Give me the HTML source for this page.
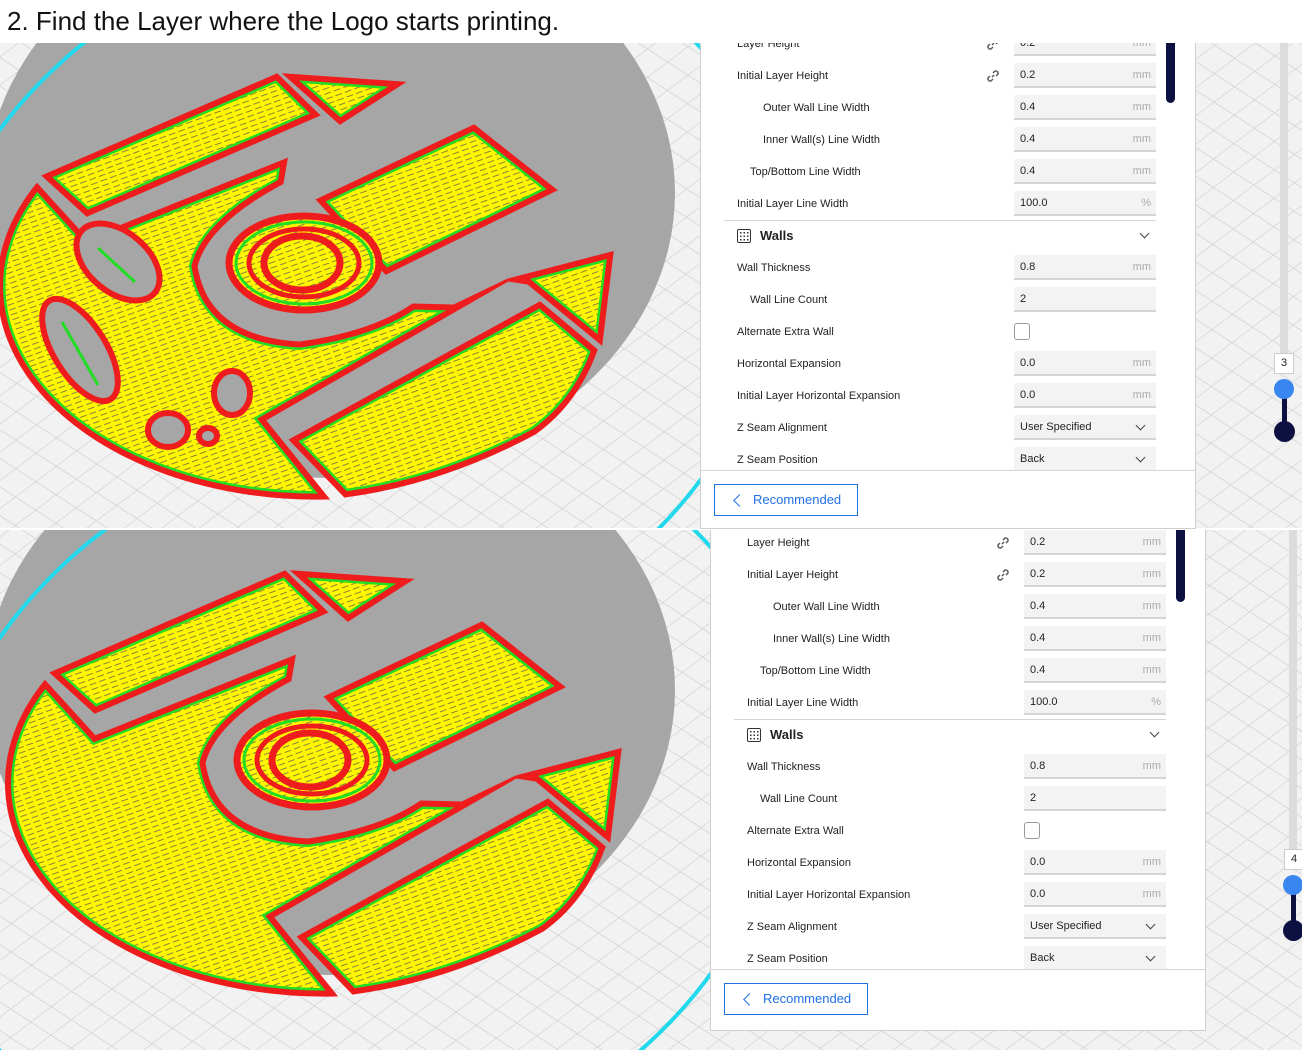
<!DOCTYPE html>
<html><head><meta charset="utf-8">
<style>
*{margin:0;padding:0;box-sizing:border-box}
html,body{width:1302px;height:1050px;overflow:hidden}
body{background:#fff;font-family:"Liberation Sans",sans-serif;position:relative}
.title{position:absolute;left:7px;top:6px;font-size:26px;color:#111;white-space:nowrap}
.view{position:absolute;left:0;overflow:hidden}
.panel{position:absolute;background:#fff;border:1px solid #cfcfcf;border-top:none;overflow:hidden}
.content{position:absolute;left:0;width:495px;height:440px}
.lab{position:absolute;font-size:11px;color:#222;white-space:nowrap;line-height:14px}
.inp{position:absolute;left:313px;width:142px;height:25px;background:#f3f3f3;border-bottom:2px solid #d4d4d4;font-size:11px;color:#222;line-height:24px;padding-left:6px}
.inp .u{position:absolute;right:5px;top:0;color:#aaa}
.dd{position:absolute;right:12px;top:7px;width:7px;height:7px;border-right:1.3px solid #444;border-bottom:1.3px solid #444;transform:rotate(45deg)}
.footer{position:absolute;left:0;top:426px;width:495px;height:80px;background:#fff;border-top:1px solid #d6d6d6}
.btn{position:absolute;left:13px;top:13px;width:144px;height:32px;border:1.5px solid #2071e8;color:#2071e8;font-size:13px;line-height:29px;padding-left:38px}
.btn:before{content:"";position:absolute;left:20px;top:11px;width:8px;height:8px;border-left:1.6px solid #2071e8;border-bottom:1.6px solid #2071e8;transform:rotate(45deg)}
.sb{position:absolute;left:465px;top:-60px;width:9px;height:119px;background:#0d1141;border-radius:5px}
.slider{position:absolute}
</style></head><body>
<div class="title">2. Find the Layer where the Logo starts printing.</div>

<svg width="0" height="0" style="position:absolute;left:0;top:0" xmlns="http://www.w3.org/2000/svg">
<defs>
<pattern id="grid" width="24" height="24" patternUnits="userSpaceOnUse" patternTransform="rotate(33) skewX(-20)">
<rect width="24" height="24" fill="#f2f2f2"/><path d="M0 0H24M0 0V24" stroke="#cfcfcf" stroke-width="1.3"/></pattern>
<pattern id="yel" width="10" height="5" patternUnits="userSpaceOnUse" patternTransform="rotate(-20)">
<rect width="10" height="5" fill="#fff600"/><rect y="4" width="7" height="1" fill="#555" opacity="0.7"/></pattern>
<path id="s1" d="M45 682 L95 737 L294 657 L290 680 Q215 720 204 763 Q215 835 308 840 Q380 830 421 802 L462 803 L516 777 L272 917 L335 995 A318 212 0 0 1 45 682 Z"/>
<path id="s2" d="M52 673 L285 572 L326 612 L95 712 Z"/>
<path id="s3" d="M294 572 L410 580 L348 620 Z"/>
<path id="s4" d="M326 697 L482 623 L563 687 L394 770 Z"/>
<path id="s5" d="M516 777 L620 750 L609 840 L536 780 Z"/>
<path id="s6" d="M299 937 L548 800 L604 847 Q585 900 543 930 Q450 980 353 993 Z"/>
<clipPath id="c1"><use href="#s1"/></clipPath>
<clipPath id="c2"><use href="#s2"/></clipPath>
<clipPath id="c3"><use href="#s3"/></clipPath>
<clipPath id="c4"><use href="#s4"/></clipPath>
<clipPath id="c5"><use href="#s5"/></clipPath>
<clipPath id="c6"><use href="#s6"/></clipPath>
<g id="logo">
<use href="#s1" fill="url(#yel)"/><use href="#s1" fill="none" stroke="#22dd22" stroke-width="14" clip-path="url(#c1)"/><use href="#s1" fill="none" stroke="#ee1c1c" stroke-width="9" clip-path="url(#c1)"/><use href="#s1" fill="none" stroke="#ee1c1c" stroke-width="3"/>
<use href="#s2" fill="url(#yel)"/><use href="#s2" fill="none" stroke="#22dd22" stroke-width="14" clip-path="url(#c2)"/><use href="#s2" fill="none" stroke="#ee1c1c" stroke-width="9" clip-path="url(#c2)"/><use href="#s2" fill="none" stroke="#ee1c1c" stroke-width="3"/>
<use href="#s3" fill="url(#yel)"/><use href="#s3" fill="none" stroke="#22dd22" stroke-width="14" clip-path="url(#c3)"/><use href="#s3" fill="none" stroke="#ee1c1c" stroke-width="9" clip-path="url(#c3)"/><use href="#s3" fill="none" stroke="#ee1c1c" stroke-width="3"/>
<use href="#s4" fill="url(#yel)"/><use href="#s4" fill="none" stroke="#22dd22" stroke-width="14" clip-path="url(#c4)"/><use href="#s4" fill="none" stroke="#ee1c1c" stroke-width="9" clip-path="url(#c4)"/><use href="#s4" fill="none" stroke="#ee1c1c" stroke-width="3"/>
<use href="#s5" fill="url(#yel)"/><use href="#s5" fill="none" stroke="#22dd22" stroke-width="14" clip-path="url(#c5)"/><use href="#s5" fill="none" stroke="#ee1c1c" stroke-width="9" clip-path="url(#c5)"/><use href="#s5" fill="none" stroke="#ee1c1c" stroke-width="3"/>
<use href="#s6" fill="url(#yel)"/><use href="#s6" fill="none" stroke="#22dd22" stroke-width="14" clip-path="url(#c6)"/><use href="#s6" fill="none" stroke="#ee1c1c" stroke-width="9" clip-path="url(#c6)"/><use href="#s6" fill="none" stroke="#ee1c1c" stroke-width="3"/>
<ellipse cx="312" cy="760" rx="75" ry="47" fill="url(#yel)" stroke="#ee1c1c" stroke-width="7"/>
<ellipse cx="312" cy="760" rx="68" ry="41" fill="none" stroke="#22dd22" stroke-width="3"/>
<ellipse cx="312" cy="760" rx="55" ry="34" fill="none" stroke="#ee1c1c" stroke-width="5"/>
<ellipse cx="310" cy="760" rx="38" ry="27" fill="url(#yel)" stroke="#ee1c1c" stroke-width="7"/>
</g>
</defs>
</svg>

<!-- TOP VIEW -->
<div class="view" style="top:43px;width:1302px;height:486px;">
<svg width="1302" height="486" viewBox="0 43 1302 486" xmlns="http://www.w3.org/2000/svg">
<rect x="0" y="43" width="1302" height="486" fill="url(#grid)"/>
<ellipse cx="330" cy="193" rx="345" ry="285" fill="#a6a6a6"/>
<ellipse cx="350" cy="305" rx="440" ry="365" transform="rotate(-23 350 305)" fill="none" stroke="#22d8ec" stroke-width="4"/>
<g transform="translate(-8,-497)"><use href="#logo"/></g>
<g fill="#a6a6a6" stroke="#ee1c1c" stroke-width="6">
<ellipse cx="118" cy="262" rx="48" ry="30" transform="rotate(40 118 262)"/>
<ellipse cx="80" cy="350" rx="26" ry="58" transform="rotate(-32 80 350)"/>
<ellipse cx="232" cy="393" rx="18" ry="22"/>
<ellipse cx="168" cy="430" rx="20" ry="17"/>
<ellipse cx="208" cy="436" rx="9" ry="8"/>
</g>
<g fill="none" stroke="#22dd22" stroke-width="3">
<path d="M98 248 L135 282"/><path d="M62 322 L98 385"/>
</g>
</svg>
</div>

<!-- BOTTOM VIEW -->
<div class="view" style="top:530px;width:1302px;height:520px;">
<svg width="1302" height="520" viewBox="0 530 1302 520" xmlns="http://www.w3.org/2000/svg">
<rect x="0" y="530" width="1302" height="520" fill="url(#grid)"/>
<ellipse cx="330" cy="690" rx="345" ry="285" fill="#a6a6a6"/>
<ellipse cx="358" cy="802" rx="440" ry="365" transform="rotate(-23 358 802)" fill="none" stroke="#22d8ec" stroke-width="4"/>
<use href="#logo"/>
</svg>
</div>
<div style="position:absolute;left:0;top:528px;width:1302px;height:2px;background:#fff"></div>

<!-- TOP PANEL -->
<div class="panel" style="left:700px;top:43px;width:496px;height:486px;">
<div class="content" style="top:1px">
<div class="sb"></div>
<div class="lab" style="left:36px;top:-7px">Layer Height</div><svg style="position:absolute;left:284px;top:-8px" width="16" height="16" viewBox="0 0 16 16"><path d="M7 9 L9 7 M5 8 L3 10 A2.5 2.5 0 0 0 6 13 L8 11 M8 5 L10 3 A2.5 2.5 0 0 1 13 6 L11 8" fill="none" stroke="#555" stroke-width="1.4"/></svg><div class="inp" style="top:-13px">0.2<span class="u">mm</span></div>
<div class="lab" style="left:36px;top:25px">Initial Layer Height</div><svg style="position:absolute;left:284px;top:24px" width="16" height="16" viewBox="0 0 16 16"><path d="M7 9 L9 7 M5 8 L3 10 A2.5 2.5 0 0 0 6 13 L8 11 M8 5 L10 3 A2.5 2.5 0 0 1 13 6 L11 8" fill="none" stroke="#555" stroke-width="1.4"/></svg><div class="inp" style="top:19px">0.2<span class="u">mm</span></div>
<div class="lab" style="left:62px;top:57px">Outer Wall Line Width</div><div class="inp" style="top:51px">0.4<span class="u">mm</span></div>
<div class="lab" style="left:62px;top:89px">Inner Wall(s) Line Width</div><div class="inp" style="top:83px">0.4<span class="u">mm</span></div>
<div class="lab" style="left:49px;top:121px">Top/Bottom Line Width</div><div class="inp" style="top:115px">0.4<span class="u">mm</span></div>
<div class="lab" style="left:36px;top:153px">Initial Layer Line Width</div><div class="inp" style="top:147px">100.0<span class="u">%</span></div>
<div style="position:absolute;left:23px;top:176px;width:432px;height:1px;background:#d4d4d4"></div>
<div style="position:absolute;left:36px;top:185px;width:14px;height:14px;border:1.5px solid #333;border-radius:2px;background:radial-gradient(circle,#333 0.8px,transparent 1px) 1px 1px/3.5px 3.5px"></div>
<div class="lab" style="left:59px;top:184px;font-size:13px;font-weight:bold;line-height:16px">Walls</div>
<div style="position:absolute;left:440px;top:186px;width:7px;height:7px;border-right:1.2px solid #444;border-bottom:1.2px solid #444;transform:rotate(45deg)"></div>
<div class="lab" style="left:36px;top:217px">Wall Thickness</div><div class="inp" style="top:211px">0.8<span class="u">mm</span></div>
<div class="lab" style="left:49px;top:249px">Wall Line Count</div><div class="inp" style="top:243px">2</div>
<div class="lab" style="left:36px;top:281px">Alternate Extra Wall</div><div style="position:absolute;left:313px;top:279px;width:16px;height:17px;border:1px solid #999;border-radius:3px"></div>
<div class="lab" style="left:36px;top:313px">Horizontal Expansion</div><div class="inp" style="top:307px">0.0<span class="u">mm</span></div>
<div class="lab" style="left:36px;top:345px">Initial Layer Horizontal Expansion</div><div class="inp" style="top:339px">0.0<span class="u">mm</span></div>
<div class="lab" style="left:36px;top:377px">Z Seam Alignment</div><div class="inp" style="top:371px">User Specified<span class="dd"></span></div>
<div class="lab" style="left:36px;top:409px">Z Seam Position</div><div class="inp" style="top:403px">Back<span class="dd"></span></div>
<div class="footer"><div class="btn">Recommended</div></div>
</div>
</div>

<!-- BOTTOM PANEL -->
<div class="panel" style="left:710px;top:530px;width:496px;height:501px;">
<div class="content" style="top:13px">
<div class="sb"></div>
<div class="lab" style="left:36px;top:-7px">Layer Height</div><svg style="position:absolute;left:284px;top:-8px" width="16" height="16" viewBox="0 0 16 16"><path d="M7 9 L9 7 M5 8 L3 10 A2.5 2.5 0 0 0 6 13 L8 11 M8 5 L10 3 A2.5 2.5 0 0 1 13 6 L11 8" fill="none" stroke="#555" stroke-width="1.4"/></svg><div class="inp" style="top:-13px">0.2<span class="u">mm</span></div>
<div class="lab" style="left:36px;top:25px">Initial Layer Height</div><svg style="position:absolute;left:284px;top:24px" width="16" height="16" viewBox="0 0 16 16"><path d="M7 9 L9 7 M5 8 L3 10 A2.5 2.5 0 0 0 6 13 L8 11 M8 5 L10 3 A2.5 2.5 0 0 1 13 6 L11 8" fill="none" stroke="#555" stroke-width="1.4"/></svg><div class="inp" style="top:19px">0.2<span class="u">mm</span></div>
<div class="lab" style="left:62px;top:57px">Outer Wall Line Width</div><div class="inp" style="top:51px">0.4<span class="u">mm</span></div>
<div class="lab" style="left:62px;top:89px">Inner Wall(s) Line Width</div><div class="inp" style="top:83px">0.4<span class="u">mm</span></div>
<div class="lab" style="left:49px;top:121px">Top/Bottom Line Width</div><div class="inp" style="top:115px">0.4<span class="u">mm</span></div>
<div class="lab" style="left:36px;top:153px">Initial Layer Line Width</div><div class="inp" style="top:147px">100.0<span class="u">%</span></div>
<div style="position:absolute;left:23px;top:176px;width:432px;height:1px;background:#d4d4d4"></div>
<div style="position:absolute;left:36px;top:185px;width:14px;height:14px;border:1.5px solid #333;border-radius:2px;background:radial-gradient(circle,#333 0.8px,transparent 1px) 1px 1px/3.5px 3.5px"></div>
<div class="lab" style="left:59px;top:184px;font-size:13px;font-weight:bold;line-height:16px">Walls</div>
<div style="position:absolute;left:440px;top:186px;width:7px;height:7px;border-right:1.2px solid #444;border-bottom:1.2px solid #444;transform:rotate(45deg)"></div>
<div class="lab" style="left:36px;top:217px">Wall Thickness</div><div class="inp" style="top:211px">0.8<span class="u">mm</span></div>
<div class="lab" style="left:49px;top:249px">Wall Line Count</div><div class="inp" style="top:243px">2</div>
<div class="lab" style="left:36px;top:281px">Alternate Extra Wall</div><div style="position:absolute;left:313px;top:279px;width:16px;height:17px;border:1px solid #999;border-radius:3px"></div>
<div class="lab" style="left:36px;top:313px">Horizontal Expansion</div><div class="inp" style="top:307px">0.0<span class="u">mm</span></div>
<div class="lab" style="left:36px;top:345px">Initial Layer Horizontal Expansion</div><div class="inp" style="top:339px">0.0<span class="u">mm</span></div>
<div class="lab" style="left:36px;top:377px">Z Seam Alignment</div><div class="inp" style="top:371px">User Specified<span class="dd"></span></div>
<div class="lab" style="left:36px;top:409px">Z Seam Position</div><div class="inp" style="top:403px">Back<span class="dd"></span></div>
<div class="footer"><div class="btn">Recommended</div></div>
</div>
</div>

<!-- TOP SLIDER -->
<div class="slider" style="left:1280px;top:43px;width:8px;height:312px;background:#dcdcdc"></div>
<div class="slider" style="left:1274px;top:353px;width:20px;height:21px;background:#fff;border:1px solid #ccc;font-size:11px;text-align:center;line-height:19px;color:#222">3</div>
<div class="slider" style="left:1282px;top:389px;width:5px;height:42px;background:#0d1141"></div>
<div class="slider" style="left:1274px;top:379px;width:20px;height:20px;border-radius:50%;background:#3a86f0"></div>
<div class="slider" style="left:1274px;top:421px;width:21px;height:21px;border-radius:50%;background:#0d1141"></div>

<!-- BOTTOM SLIDER -->
<div class="slider" style="left:1289px;top:530px;width:8px;height:319px;background:#dcdcdc"></div>
<div class="slider" style="left:1284px;top:849px;width:20px;height:21px;background:#fff;border:1px solid #ccc;font-size:11px;text-align:center;line-height:19px;color:#222">4</div>
<div class="slider" style="left:1291px;top:885px;width:5px;height:45px;background:#0d1141"></div>
<div class="slider" style="left:1283px;top:875px;width:20px;height:20px;border-radius:50%;background:#3a86f0"></div>
<div class="slider" style="left:1283px;top:920px;width:21px;height:21px;border-radius:50%;background:#0d1141"></div>
</body></html>
